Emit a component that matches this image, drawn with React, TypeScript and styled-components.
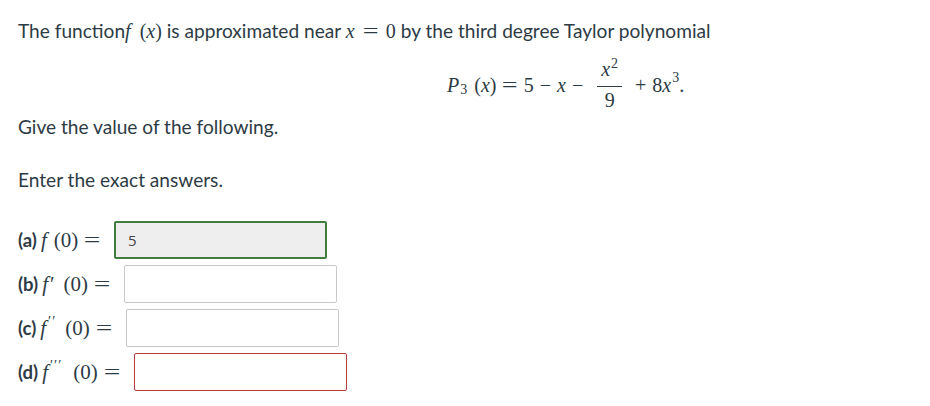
import React from 'react';
import styled, { createGlobalStyle } from 'styled-components';

const GlobalStyle = createGlobalStyle`
  html, body {
    margin: 0;
    padding: 0;
    background: #ffffff;
  }
  body {
    font-family: Lato, "Open Sans", sans-serif;
    color: #2d3b45;
  }
`;

const Page = styled.div`
  padding: 17px 18px;
  width: 930px;
  height: 406px;
  box-sizing: border-box;
`;

const Text = styled.p<{ $gap?: number }>`
  margin: 0;
  margin-top: ${(p) => p.$gap ?? 0}px;
  font-size: 19.1px;
  line-height: 28px;
  white-space: nowrap;
`;

const M = styled.span<{ $size?: number }>`
  font-family: "Liberation Serif", "Times New Roman", serif;
  font-size: ${(p) => p.$size ?? 20}px;
  white-space: nowrap;
`;

const I = styled.i`
  font-style: italic;
`;

const Rel = styled.span<{ $wide?: boolean }>`
  display: inline-block;
  margin: 0 ${(p) => (p.$wide ? 10 : 8)}px;
  transform: scaleX(1.4);
`;

const Bin = styled.span`
  display: inline-block;
  margin: 0 6px;
`;

const Display = styled.div`
  display: flex;
  align-items: center;
  padding-left: 429px;
  margin-top: 13px;
  height: 55px;
  font-family: "Liberation Serif", "Times New Roman", serif;
  font-size: 20px;
  white-space: pre;
`;

const Frac = styled.span`
  display: inline-flex;
  flex-direction: column;
  align-items: center;
  margin: 0 7px 2px 8px;
  line-height: 26px;
`;

const Num = styled.span`
  padding: 0 4px 1px;
  border-bottom: 1px solid #2d3b45;
`;

const Sup = styled.sup`
  font-size: 14px;
  vertical-align: 0;
  position: relative;
  top: -8px;
  margin-left: 1px;
`;

const Sub = styled.sub`
  font-size: 14px;
  vertical-align: 0;
  position: relative;
  top: 4px;
  margin: 0 7px 0 1px;
`;

const Answers = styled.div`
  display: flex;
  flex-direction: column;
  gap: 6px;
  margin-top: 27px;
`;

const Row = styled.div`
  display: flex;
  align-items: center;
  gap: 8px;
`;

const Label = styled.span`
  display: flex;
  align-items: baseline;
  white-space: pre;
`;

const Tag = styled.b`
  font-size: 18.5px;
  font-weight: 700;
  margin-right: 4px;
`;

const Primes = styled.span<{ $small?: boolean }>`
  display: inline-block;
  font-size: ${(p) => (p.$small ? 14 : 21)}px;
  position: relative;
  top: ${(p) => (p.$small ? -9 : 0)}px;
  margin: 0 0 0 2px;
  letter-spacing: ${(p) => (p.$small ? 1 : 0)}px;
`;

const Arg = styled.span<{ $space: number }>`
  margin-left: ${(p) => p.$space}px;
`;

const Field = styled.div<{ $state?: 'correct' | 'wrong' }>`
  box-sizing: border-box;
  width: 213px;
  height: 38px;
  padding: 0 12px;
  display: flex;
  align-items: center;
  font-family: "Open Sans", sans-serif;
  font-size: 15px;
  color: #444;
  background: ${(p) => (p.$state === 'correct' ? '#eeeeee' : '#ffffff')};
  border: ${(p) =>
    p.$state === 'correct'
      ? '2px solid #3f7d3f'
      : p.$state === 'wrong'
      ? '1.5px solid #b53a3a'
      : '1px solid #c8c8c8'};
  border-radius: 2px;
`;

const rows: { tag: string; primes: string; space: number; value?: string; state?: 'correct' | 'wrong' }[] = [
  { tag: '(a)', primes: '', space: 7, value: '5', state: 'correct' },
  { tag: '(b)', primes: '′', space: 9 },
  { tag: '(c)', primes: '′′', space: 9 },
  { tag: '(d)', primes: '′′′', space: 11, state: 'wrong' },
];

export default function App() {
  return (
    <>
      <GlobalStyle />
      <Page>
        <Text>
          The function<M><I>f</I><Arg $space={9}>(<I>x</I>)</Arg></M> is approximated near <M><I>x</I><Rel $wide>=</Rel>0</M> by the third degree Taylor polynomial
        </Text>
        <Display>
          <I>P</I>
          <Sub>3</Sub>(<I>x</I>)<Rel>=</Rel>5<Bin>−</Bin><I>x</I><Bin>−</Bin>
          <Frac>
            <Num>
              <I>x</I>
              <Sup>2</Sup>
            </Num>
            <span>9</span>
          </Frac>
          <Bin>+</Bin>8<I>x</I>
          <Sup>3</Sup>.
        </Display>
        <Text>Give the value of the following.</Text>
        <Text $gap={25}>Enter the exact answers.</Text>
        <Answers>
          {rows.map((r) => (
            <Row key={r.tag}>
              <Label>
                <Tag>{r.tag}</Tag>
                <M $size={21}>
                  <I>f</I>
                  {r.primes && <Primes $small={r.primes.length > 1}>{r.primes}</Primes>}
                  <Arg $space={r.space}>(0)</Arg>
                  <Rel>=</Rel>
                </M>
              </Label>
              <Field $state={r.state}>{r.value}</Field>
            </Row>
          ))}
        </Answers>
      </Page>
    </>
  );
}
